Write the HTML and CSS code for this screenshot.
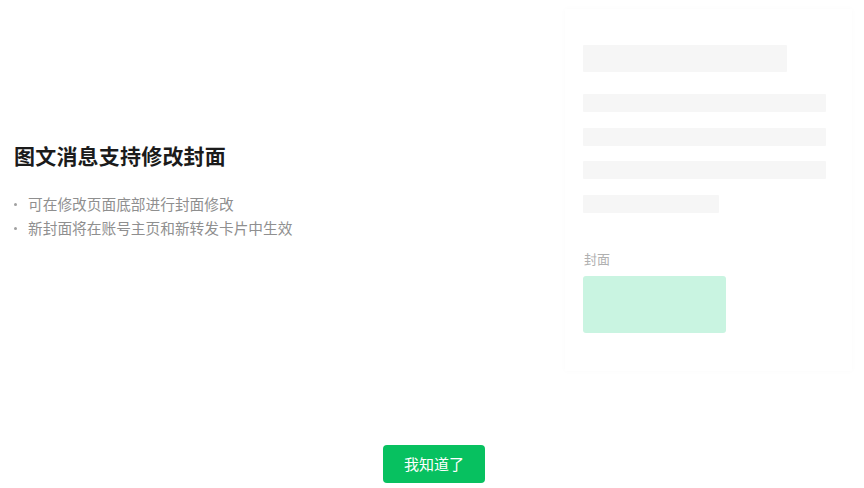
FILE: index.html
```html
<!DOCTYPE html>
<html lang="zh-CN">
<head>
<meta charset="utf-8">
<title>图文消息支持修改封面</title>
<link rel="stylesheet" href="styles.css">
</head>
<body>
<div class="page">
  <div class="content">
    <section class="intro">
      <h1 class="title">图文消息支持修改封面</h1>
      <ul class="points">
        <li>可在修改页面底部进行封面修改</li>
        <li>新封面将在账号主页和新转发卡片中生效</li>
      </ul>
    </section>
    <aside class="preview">
      <div class="bar bar-head"></div>
      <div class="lines">
        <div class="bar bar-line"></div>
        <div class="bar bar-line"></div>
        <div class="bar bar-line"></div>
        <div class="bar bar-short"></div>
      </div>
      <div class="cover-label">封面</div>
      <div class="cover"></div>
    </aside>
  </div>
  <div class="footer">
    <button class="btn">我知道了</button>
  </div>
</div>
</body>
</html>
```
FILE: styles.css
```css
* { box-sizing: border-box; }
html, body { margin: 0; padding: 0; background: #fff; }
body {
  font-family: "Noto Sans CJK SC", "Noto Sans", sans-serif;
  width: 864px;
  height: 488px;
  overflow: hidden;
}
.page {
  display: flex;
  flex-direction: column;
  height: 488px;
}
.content {
  display: flex;
  flex: 1;
}
.intro {
  width: 565px;
  padding: 140px 0 0 14px;
}
.title {
  margin: 0;
  font-size: 21px;
  line-height: 30px;
  font-weight: 700;
  color: #1b1b1b;
  letter-spacing: 0.2px;
}
.points {
  list-style: none;
  margin: 22px 0 0 0;
  padding: 0;
}
.points li {
  position: relative;
  padding-left: 14px;
  font-size: 14.7px;
  line-height: 24px;
  color: #8f8f8f;
}
.points li::before {
  content: "";
  position: absolute;
  left: 0;
  top: 11px;
  width: 3px;
  height: 3px;
  border-radius: 50%;
  background: #a0a0a0;
}
.preview {
  width: 287px;
  height: 362px;
  margin-top: 9px;
  padding: 36px 18px 0 18px;
  background: #fff;
  box-shadow: 0 0 6px rgba(0, 0, 0, 0.025);
  display: flex;
  flex-direction: column;
}
.bar {
  background: #f6f6f6;
  border-radius: 1px;
}
.bar-head {
  width: 204px;
  height: 27px;
}
.lines {
  display: flex;
  flex-direction: column;
  gap: 15.5px;
  margin-top: 22px;
}
.bar-line {
  width: 243px;
  height: 18px;
}
.bar-short {
  width: 136px;
  height: 18px;
}
.cover-label {
  margin-top: 37px;
  padding-left: 1px;
  font-size: 13px;
  line-height: 18px;
  color: #b0b0b0;
}
.cover {
  margin-top: 8px;
  width: 143px;
  height: 57px;
  border-radius: 3px;
  background: #c9f4e1;
}
.footer {
  display: flex;
  justify-content: center;
  padding: 0 0 5px 4px;
}
.btn {
  width: 102px;
  height: 38px;
  border: 0;
  border-radius: 4px;
  background: #07c160;
  color: #fff;
  font-family: "Noto Sans CJK SC", "Noto Sans", sans-serif;
  font-size: 15px;
  line-height: 38px;
  padding: 0;
}
```
